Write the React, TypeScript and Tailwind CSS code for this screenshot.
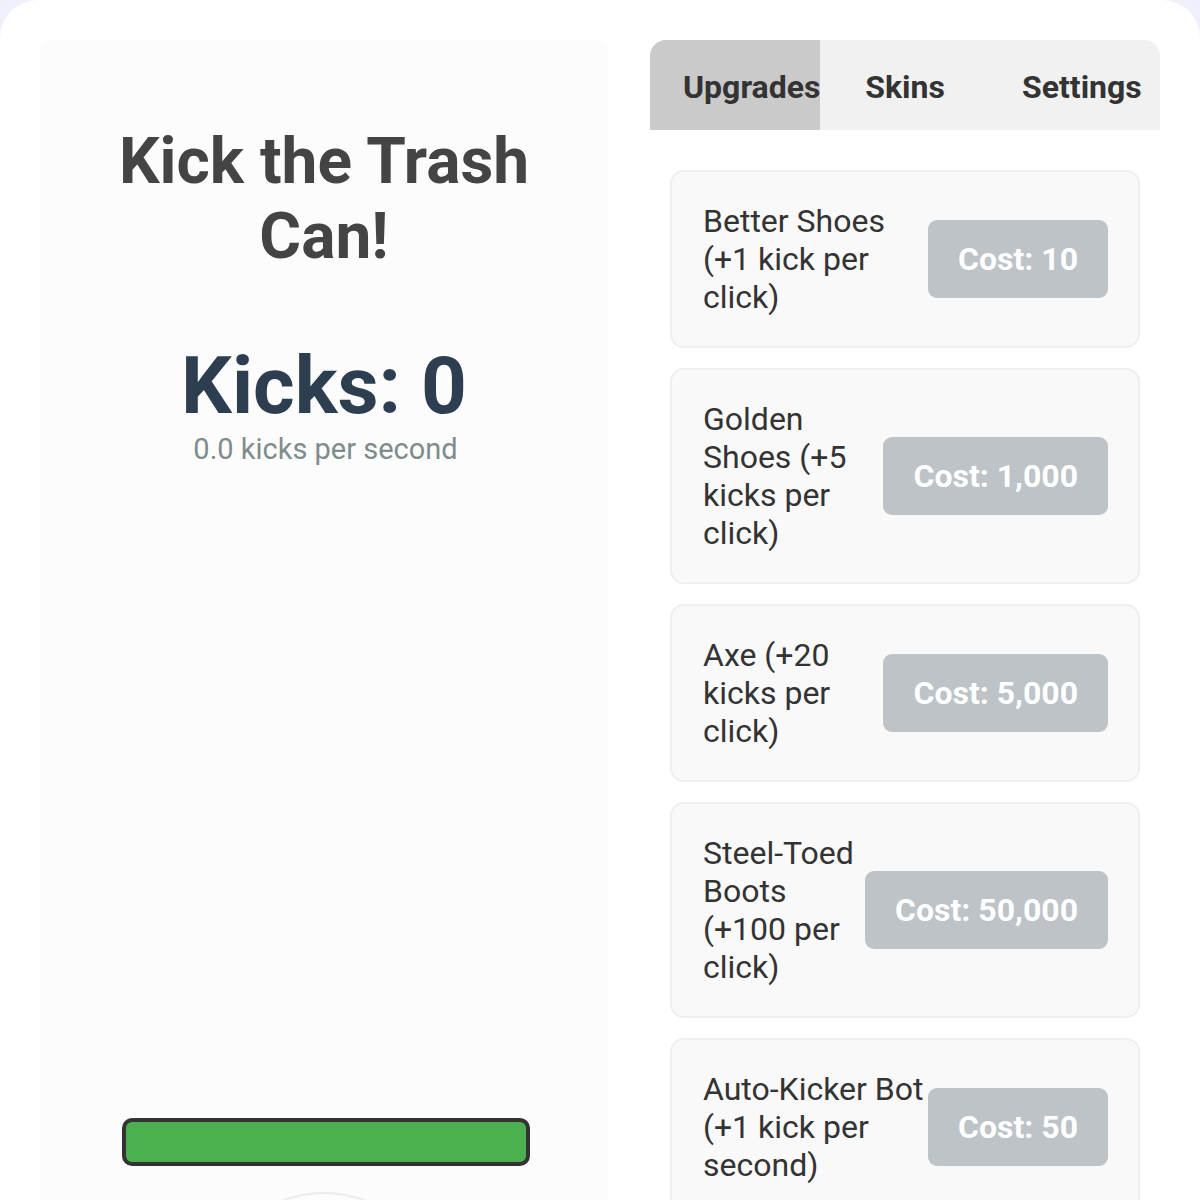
import React from 'react'

type Upgrade = {
  name: string
  cost: string
}

const upgrades: Upgrade[] = [
  { name: 'Better Shoes (+1 kick per click)', cost: 'Cost: 10' },
  { name: 'Golden Shoes (+5 kicks per click)', cost: 'Cost: 1,000' },
  { name: 'Axe (+20 kicks per click)', cost: 'Cost: 5,000' },
  { name: 'Steel-Toed Boots (+100 per click)', cost: 'Cost: 50,000' },
  { name: 'Auto-Kicker Bot (+1 kick per second)', cost: 'Cost: 50' },
]

function UpgradeCard({ upgrade }: { upgrade: Upgrade }) {
  return (
    <div className="flex items-center border-2 border-[#efefef] bg-[#f9f9f9] rounded-[14px] pl-[31px] pr-[30px] py-[30px]">
      <div className="flex-1 min-w-0 text-[32px] leading-[38px] text-[#333]">{upgrade.name}</div>
      <button className="flex-shrink-0 bg-[#bdc3c7] text-white font-bold text-[32px] leading-[38px] px-[30px] py-[20px] rounded-[9px] whitespace-nowrap">
        {upgrade.cost}
      </button>
    </div>
  )
}

export default function App() {
  return (
    <div
      className="h-[1200px] overflow-hidden bg-[#eef1f9]"
      style={{ fontFamily: 'Roboto, "Noto Sans", sans-serif' }}
    >
      <div className="bg-white rounded-t-[38px] min-h-full flex items-start gap-[42px] px-[40px] pt-[40px]">
        {/* Game panel */}
        <div className="w-[568px] flex-shrink-0 bg-[#fcfcfc] rounded-[10px] flex flex-col items-center pt-[84px]">
          <h1 className="w-[440px] text-center font-bold text-[64px] leading-[75px] text-[#444]">
            Kick the Trash Can!
          </h1>
          <div className="mt-[72px] font-bold text-[80px] leading-none text-[#2c3e50]">Kicks: 0</div>
          <div className="mt-[9px] ml-[3px] text-[29px] leading-none text-[#7f8c8d]">0.0 kicks per second</div>
          <div className="h-[654px] flex-shrink-0" />
          <div className="ml-[4px] w-[408px] h-[48px] flex-shrink-0 border-4 border-[#333] rounded-[10px] bg-[#4caf50]" />
          <div className="mt-[26px] w-[236px] h-[236px] flex-shrink-0 rounded-full border-2 border-[#ececec]" />
        </div>

        {/* Shop panel */}
        <div className="w-[510px] flex-shrink-0 flex flex-col">
          <div className="flex h-[90px] bg-[#f1f1f1] rounded-t-[16px] overflow-hidden text-[32px] font-bold text-[#333] pt-[4px]">
            <div className="w-[170px] bg-[#cacaca] -mt-[4px] pt-[4px] flex items-center pl-[33px] whitespace-nowrap">Upgrades</div>
            <div className="w-[170px] flex items-center justify-center">Skins</div>
            <div className="w-[170px] flex items-center pl-[32px] whitespace-nowrap">Settings</div>
          </div>
          <div className="flex flex-col gap-[20px] px-[20px] pt-[40px]">
            {upgrades.map((u) => (
              <UpgradeCard key={u.name} upgrade={u} />
            ))}
          </div>
        </div>
      </div>
    </div>
  )
}
